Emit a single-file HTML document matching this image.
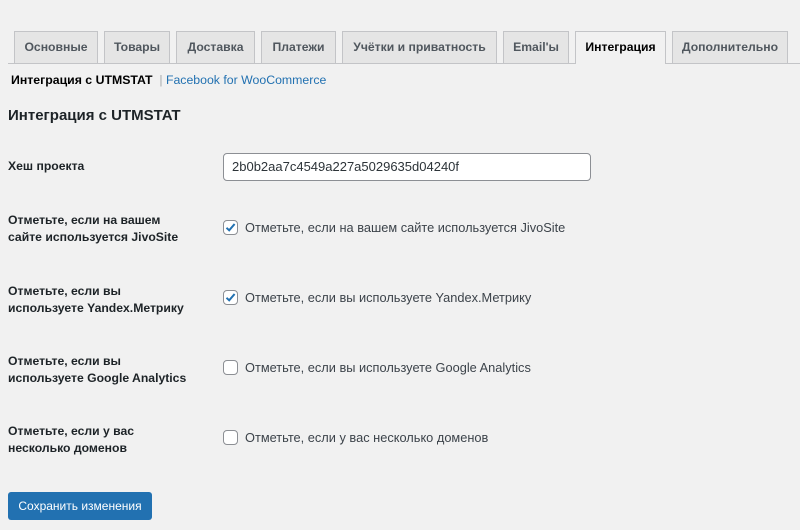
<!DOCTYPE html>
<html><head><meta charset="utf-8"><style>
*{box-sizing:border-box;margin:0;padding:0}
body{width:800px;height:530px;background:#f1f1f1;font-family:"Liberation Sans",sans-serif;color:#1d2327;position:relative;overflow:hidden;font-size:13px}
.tab{position:absolute;top:31px;height:32px;background:#e5e5e5;border:1px solid #c3c4c7;border-bottom:none;color:#50575e;font-weight:bold;font-size:12.2px;line-height:31px;text-align:center;white-space:nowrap}
.tab.act{background:#f1f1f1;color:#000;height:33px;z-index:2}
.line{position:absolute;left:8px;right:0;top:63px;border-top:1px solid #c3c4c7}
.abs{position:absolute;white-space:nowrap}
.lbl{position:absolute;left:8px;font-weight:bold;font-size:12.2px;line-height:17px;color:#1d2327}
.cb{position:absolute;left:223px;width:15px;height:15px;border:1px solid #8c8f94;border-radius:4px;background:#fff}
.cbt{position:absolute;left:245px;font-size:12.8px;color:#3c434a;white-space:nowrap}
</style></head><body>
<div class="tab" style="left:14px;width:84px">Основные</div>
<div class="tab" style="left:104px;width:66px">Товары</div>
<div class="tab" style="left:176px;width:79px">Доставка</div>
<div class="tab" style="left:261px;width:75px">Платежи</div>
<div class="tab" style="left:342px;width:155px">Учётки и приватность</div>
<div class="tab" style="left:503px;width:66px">Email'ы</div>
<div class="tab act" style="left:575px;width:91px">Интеграция</div>
<div class="tab" style="left:672px;width:116px">Дополнительно</div>
<div class="line"></div>
<div class="abs" style="left:11px;top:73px;font-size:12.3px;font-weight:bold;color:#000">Интеграция с UTMSTAT <span style="font-weight:normal;color:#a7aaad">&nbsp;|</span> <span style="font-weight:normal;color:#2271b1">Facebook for WooCommerce</span></div>
<div class="abs" style="left:8px;top:107px;font-size:15px;font-weight:bold;color:#1d2327">Интеграция с UTMSTAT</div>
<div class="lbl" style="top:158px">Хеш проекта</div>
<div class="abs" style="left:223px;top:153px;width:368px;height:28px;background:#fff;border:1px solid #8c8f94;border-radius:4px;padding-left:8px;line-height:26px;font-size:13px;color:#2c3338">2b0b2aa7c4549a227a5029635d04240f</div>
<div class="lbl" style="top:212px">Отметьте, если на вашем<br>сайте используется JivoSite</div>
<div class="cb" style="top:220px"><svg width="13" height="13" viewBox="0 0 13 13"><path d="M2.5 6.8 L5.2 9.3 L10.6 3" stroke="#2271b1" stroke-width="2" fill="none"/></svg></div>
<div class="cbt" style="top:220px">Отметьте, если на вашем сайте используется JivoSite</div>
<div class="lbl" style="top:283px">Отметьте, если вы<br>используете Yandex.Метрику</div>
<div class="cb" style="top:290px"><svg width="13" height="13" viewBox="0 0 13 13"><path d="M2.5 6.8 L5.2 9.3 L10.6 3" stroke="#2271b1" stroke-width="2" fill="none"/></svg></div>
<div class="cbt" style="top:290px">Отметьте, если вы используете Yandex.Метрику</div>
<div class="lbl" style="top:353px">Отметьте, если вы<br>используете Google Analytics</div>
<div class="cb" style="top:360px"></div>
<div class="cbt" style="top:360px">Отметьте, если вы используете Google Analytics</div>
<div class="lbl" style="top:423px">Отметьте, если у вас<br>несколько доменов</div>
<div class="cb" style="top:430px"></div>
<div class="cbt" style="top:430px">Отметьте, если у вас несколько доменов</div>
<div class="abs" style="left:8px;top:492px;width:144px;height:28px;background:#2271b1;border-radius:3px;color:#fff;font-size:12px;line-height:28px;text-align:center">Сохранить изменения</div>
</body></html>
